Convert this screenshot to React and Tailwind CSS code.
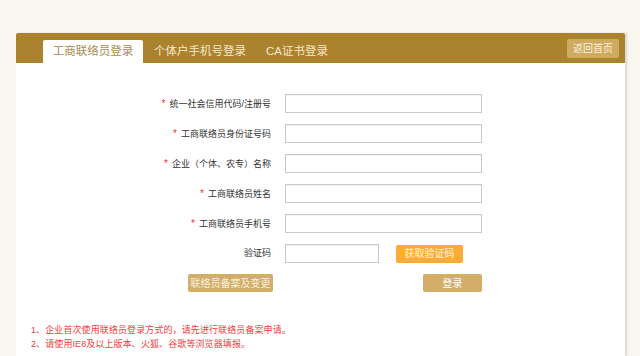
import React from "react";

const font = { fontFamily: '"Liberation Sans", "Noto Sans CJK SC", sans-serif' };

function Row({ label, req, children }) {
  return (
    <div className="flex items-center h-[19px] mb-[11px]">
      <div className="w-[256px] text-right text-[9px] text-[#333] leading-none pr-[1px]">
        {req && <span className="text-[#e33] text-[10px] mr-[4px]">*</span>}
        {label}
      </div>
      <div className="ml-[13px] flex items-center">{children}</div>
    </div>
  );
}

const Input = ({ w = "w-[197px]" }) => (
  <input
    className={`${w} h-[19px] border border-[#c9c9c9] bg-white outline-none shadow-[inset_0_1px_1px_rgba(0,0,0,0.06)]`}
  />
);

export default function App() {
  return (
    <div className="min-h-[356px] bg-[#f9f6ef] pt-[33px] pl-[16px] pr-[15px]" style={font}>
      <div className="w-[609px] bg-white shadow-[2px_0_2px_rgba(0,0,0,0.12)] rounded-t-[2px] h-[323px] overflow-hidden">
        <div className="h-[30px] bg-[#ab822e] flex items-end pl-[27px] pr-[6px] relative">
          <div className="w-[100px] h-[23px] bg-white rounded-t-[2px] flex items-center justify-center text-[11.5px] text-[#a88b4c]">
            工商联络员登录
          </div>
          <div className="h-[23px] flex items-center ml-[11px] text-[11.5px] text-[#f6e8cc]">个体户手机号登录</div>
          <div className="h-[23px] flex items-center ml-[20px] text-[11.5px] text-[#f6e8cc]">CA证书登录</div>
          <div className="ml-auto self-center w-[52px] h-[19px] bg-[#cfab62] rounded-[2px] flex items-center justify-center text-[10px] text-[#fbf0db]">
            返回首页
          </div>
        </div>
        <div className="pt-[31px]">
          <Row req label="统一社会信用代码/注册号"><Input /></Row>
          <Row req label="工商联络员身份证号码"><Input /></Row>
          <Row req label="企业（个体、农专）名称"><Input /></Row>
          <Row req label="工商联络员姓名"><Input /></Row>
          <Row req label="工商联络员手机号"><Input /></Row>
          <Row label="验证码">
            <Input w="w-[94px]" />
            <div className="ml-[17px] w-[67px] h-[18px] bg-[#fdab37] rounded-[2px] flex items-center justify-center text-[10px] text-[#fff3e0]">
              获取验证码
            </div>
          </Row>
          <div className="flex items-center h-[18px]">
            <div className="ml-[172px] w-[85px] h-[18px] bg-[#d2ae68] rounded-[2px] flex items-center justify-center text-[10px] text-[#fbf1dd]">
              联络员备案及变更
            </div>
            <div className="ml-[150px] w-[59px] h-[18px] bg-[#d2ae68] rounded-[2px] flex items-center justify-center text-[10px] text-white">
              登录
            </div>
          </div>
          <div className="mt-[31px] pl-[15px] text-[9px] leading-[14px] text-[#f33c3c] tracking-[0.1px]">
            <div>1、企业首次使用联络员登录方式的，请先进行联络员备案申请。</div>
            <div>2、请使用IE8及以上版本、火狐、谷歌等浏览器填报。</div>
          </div>
        </div>
      </div>
    </div>
  );
}
